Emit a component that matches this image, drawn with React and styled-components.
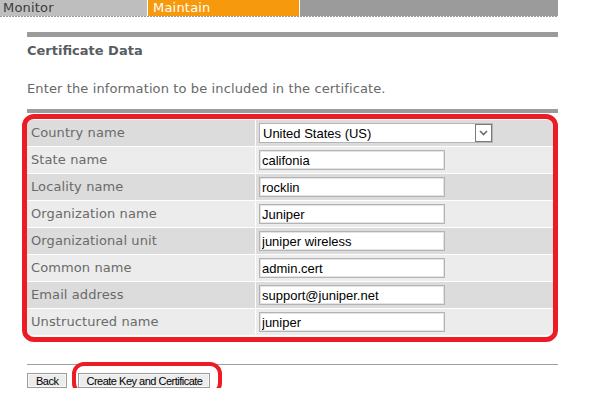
import React from 'react';
import styled, { createGlobalStyle } from 'styled-components';

const GlobalStyle = createGlobalStyle`
  html, body {
    margin: 0;
    padding: 0;
    background: #ffffff;
  }
  body {
    font-family: "DejaVu Sans", Verdana, sans-serif;
  }
`;

const Page = styled.div`
  width: 558px;
`;

// top navigation tabs
const TopNav = styled.div`
  display: flex;
  height: 16px;
  padding-bottom: 1px;
  background: repeating-linear-gradient(to right, #9a9a9a 0 2px, transparent 2px 3px) bottom / 100% 1px no-repeat;
`;

const Tab = styled.div`
  width: ${(props) => props.width}px;
  padding-left: ${(props) => (props.active ? 5 : 3)}px;
  box-sizing: border-box;
  background: ${(props) => (props.active ? '#f7990c' : '#bebebe')};
  color: ${(props) => (props.active ? '#ffffff' : '#3c3c3c')};
  border-right: 1px solid #ffffff;
  font-size: 13px;
  letter-spacing: 0.2px;
  line-height: 16px;
`;

const TabFiller = styled.div`
  flex: 1;
  background: #9b9b9b;
`;

const Content = styled.div`
  padding: 15px 0 0 27px;
`;

const Rule = styled.div`
  height: ${(props) => props.size}px;
  margin-top: ${(props) => props.gap || 0}px;
  background: ${(props) => props.color || '#9b9b9b'};
`;

const Title = styled.h2`
  margin: 0;
  padding: 5px 0 0;
  font-size: 13px;
  line-height: 18px;
  font-weight: bold;
  color: #595d63;
`;

const Intro = styled.p`
  margin: 0;
  padding: 21px 0 12px;
  font-size: 13px;
  letter-spacing: 0.12px;
  line-height: 16px;
  color: #686868;
`;

const Marked = styled.div`
  margin: 1px 0 0 -5px;
  border: 5px solid #ed1c24;
  border-radius: 12px;
  overflow: hidden;
  padding: 1px 0 2px;
  background: #ffffff;
`;

const FormGrid = styled.div`
  display: grid;
  grid-template-columns: 228px 1fr;
  grid-auto-rows: 26px;
  gap: 1px;
`;

const LabelCell = styled.div`
  display: flex;
  align-items: center;
  padding: 0 0 2px 4px;
  background: ${(props) => (props.odd ? '#ececec' : '#dcdcdc')};
  color: #6a6a6a;
  font-size: 13px;
  letter-spacing: 0.1px;
`;

const ValueCell = styled.div`
  display: flex;
  align-items: center;
  padding-left: 3px;
  background: ${(props) => (props.odd ? '#ececec' : '#dcdcdc')};
`;

const TextInput = styled.input`
  width: 186px;
  height: 20px;
  box-sizing: border-box;
  margin: 0;
  padding: 0 2px;
  border: 1px solid #b4b4b4;
  box-shadow: inset 0 0 0 1px #e4e4e4;
  font-family: "Liberation Sans", Arial, sans-serif;
  font-size: 13px;
  color: #000000;
  background: #ffffff;
  outline: none;
`;

const SelectBox = styled.div`
  display: flex;
  align-items: center;
  width: 234px;
  height: 20px;
  box-sizing: border-box;
  border: 1px solid #b4b4b4;
  background: #ffffff;
`;

const SelectField = styled.select`
  flex: 1;
  height: 18px;
  margin: 0;
  padding: 0 0 0 3px;
  border: none;
  appearance: none;
  background: transparent;
  font-family: "Liberation Sans", Arial, sans-serif;
  font-size: 13px;
  color: #000000;
  outline: none;
`;

const ArrowBox = styled.span`
  display: flex;
  align-items: center;
  justify-content: center;
  width: 17px;
  height: 18px;
  box-sizing: border-box;
  border: 1px solid #7a7a7a;
  background: #ffffff;
`;

const Actions = styled.div`
  display: flex;
  align-items: flex-start;
  gap: 11px;
  padding-top: 8px;
`;

const Button = styled.button`
  display: block;
  height: 15px;
  margin: 0;
  padding: 0 ${(props) => props.pad}px;
  border: 1px solid #9c9c9c;
  box-shadow: inset 0 0 0 1px #f8f8f8;
  background: #ececec;
  font-family: "Liberation Sans", Tahoma, Arial, sans-serif;
  font-size: 11px;
  letter-spacing: -0.5px;
  line-height: 12px;
  color: #000000;
`;

// red annotation drawn around the create button
const Circled = styled.div`
  position: relative;
  display: flex;

  &::after {
    content: '';
    position: absolute;
    top: -11px;
    left: -6px;
    right: -12px;
    bottom: -7px;
    border: 4px solid #ed1c24;
    border-radius: 12px;
    pointer-events: none;
  }
`;

const fields = [
  { label: 'State name', value: 'califonia' },
  { label: 'Locality name', value: 'rocklin' },
  { label: 'Organization name', value: 'Juniper' },
  { label: 'Organizational unit', value: 'juniper wireless' },
  { label: 'Common name', value: 'admin.cert' },
  { label: 'Email address', value: 'support@juniper.net' },
  { label: 'Unstructured name', value: 'juniper' },
];

function Chevron() {
  return (
    <svg width="9" height="6" viewBox="0 0 9 6">
      <path d="M1 1 L4.5 4.5 L8 1" fill="none" stroke="#6e6e6e" strokeWidth="1.6" />
    </svg>
  );
}

function App() {
  return (
    <Page>
      <GlobalStyle />
      <TopNav>
        <Tab width={148}>Monitor</Tab>
        <Tab width={152} active>Maintain</Tab>
        <TabFiller />
      </TopNav>
      <Content>
        <Rule size={5} />
        <Title>Certificate Data</Title>
        <Intro>Enter the information to be included in the certificate.</Intro>
        <Rule size={4} />
        <Marked>
          <FormGrid>
            <LabelCell>Country name</LabelCell>
            <ValueCell>
              <SelectBox>
                <SelectField defaultValue="US">
                  <option value="US">United States (US)</option>
                </SelectField>
                <ArrowBox><Chevron /></ArrowBox>
              </SelectBox>
            </ValueCell>
            {fields.map((field, index) => (
              <React.Fragment key={field.label}>
                <LabelCell odd={index % 2 === 0}>{field.label}</LabelCell>
                <ValueCell odd={index % 2 === 0}>
                  <TextInput type="text" defaultValue={field.value} />
                </ValueCell>
              </React.Fragment>
            ))}
          </FormGrid>
        </Marked>
        <Rule size={1} color="#a0a0a0" gap={22} />
        <Actions>
          <Button pad={8}>Back</Button>
          <Circled>
            <Button pad={7}>Create Key and Certificate</Button>
          </Circled>
        </Actions>
      </Content>
    </Page>
  );
}

export default App;
